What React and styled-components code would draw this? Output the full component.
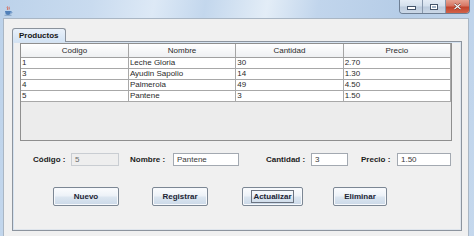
import styled, { createGlobalStyle } from "styled-components";

const Global = createGlobalStyle`
  html, body { margin: 0; padding: 0; }
  body {
    width: 474px;
    height: 236px;
    overflow: hidden;
    font-family: "Liberation Sans", Arial, sans-serif;
  }
`;

const columns = ["Codigo", "Nombre", "Cantidad", "Precio"];

const productos = [
  ["1", "Leche Gloria", "30", "2.70"],
  ["3", "Ayudin Sapolio", "14", "1.30"],
  ["4", "Palmerola", "49", "4.50"],
  ["5", "Pantene", "3", "1.50"],
];

const campos = [
  { label: "Código :", w: 38, value: "5", fw: 48, after: 11, disabled: true },
  { label: "Nombre :", w: 43, value: "Pantene", fw: 66, after: 27 },
  { label: "Cantidad :", w: 45, value: "3", fw: 37, after: 13 },
  { label: "Precio :", w: 36, value: "1.50", fw: 54, after: 0 },
];

const botones = [
  { text: "Nuevo", w: 66, ml: 33 },
  { text: "Registrar", w: 56, ml: 33 },
  { text: "Actualizar", w: 61, ml: 34, focus: true },
  { text: "Eliminar", w: 54, ml: 30 },
];

const JavaIcon = () => (
  <svg width="9" height="10" viewBox="0 0 9 10">
    <path d="M3.5 0.5 C2.5 1.8 4.5 2.4 3.3 3.8" stroke="#d9533a" strokeWidth="0.9" fill="none" />
    <path d="M5.3 0.8 C4.6 1.8 5.8 2.3 5 3.6" stroke="#d9533a" strokeWidth="0.8" fill="none" />
    <path d="M1 5 L7 5 L6.3 8.3 Q4 9.6 1.7 8.3 Z" fill="#4f7fb8" />
    <path d="M7 5.6 Q8.7 5.8 7.6 7.4" stroke="#4f7fb8" strokeWidth="0.8" fill="none" />
    <path d="M0.5 9.3 L7.5 9.3" stroke="#6f8fb3" strokeWidth="0.7" />
  </svg>
);

const App = () => {
  return (
    <>
      <Global />
      <Window>
        <TitleBar>
          <IconSlot>
            <JavaIcon />
          </IconSlot>
          <Controls>
            <CtrlButton>
              <MinGlyph />
            </CtrlButton>
            <CtrlButton>
              <MaxGlyph />
            </CtrlButton>
            <CloseButton>
              <svg width="9" height="7" viewBox="0 0 9 7">
                <path d="M1.5 1 L7.5 6 M7.5 1 L1.5 6" stroke="#4a1a12" strokeWidth="2.2" />
                <path d="M1.5 1 L7.5 6 M7.5 1 L1.5 6" stroke="#ffffff" strokeWidth="1.2" />
              </svg>
            </CloseButton>
          </Controls>
        </TitleBar>
        <Frame>
          <Content>
            <Tab>Productos</Tab>
            <TabPanel>
              <ScrollPane>
                <Table>
                  <thead>
                    <tr>
                      {columns.map((c) => (
                        <HeadCell key={c}>{c}</HeadCell>
                      ))}
                    </tr>
                  </thead>
                  <tbody>
                    {productos.map((row) => (
                      <tr key={row[0]}>
                        {row.map((v, i) => (
                          <Cell key={i}>{v}</Cell>
                        ))}
                      </tr>
                    ))}
                  </tbody>
                </Table>
              </ScrollPane>
              <FormRow>
                {campos.map((c) => (
                  <FieldGroup key={c.label} $after={c.after}>
                    <Label $w={c.w}>{c.label}</Label>
                    <Field $w={c.fw} $disabled={c.disabled}>
                      {c.value}
                    </Field>
                  </FieldGroup>
                ))}
              </FormRow>
              <ButtonRow>
                {botones.map((b) => (
                  <Button key={b.text} $w={b.w} $ml={b.ml}>
                    <ButtonText $focus={b.focus}>{b.text}</ButtonText>
                  </Button>
                ))}
              </ButtonRow>
            </TabPanel>
          </Content>
        </Frame>
      </Window>
    </>
  );
};

const Window = styled.div`
  width: 474px;
  height: 236px;
  display: flex;
  flex-direction: column;
  background: linear-gradient(
    100deg,
    #bcd2ea 0%,
    #c9dbef 18%,
    #dde9f6 30%,
    #c3d7ed 40%,
    #e3edf7 52%,
    #c1d5ec 62%,
    #b6cde7 78%,
    #c5d8ed 100%
  );
`;

const TitleBar = styled.div`
  height: 18px;
  display: flex;
  align-items: flex-start;
  justify-content: space-between;
`;

const IconSlot = styled.div`
  width: 9px;
  height: 10px;
  margin: 6px 0 0 4px;
  display: flex;
`;

const Controls = styled.div`
  display: flex;
  height: 13px;
  margin-right: 4px;
  border: 1px solid #6e7f94;
  border-top: none;
  border-radius: 0 0 4px 4px;
  overflow: hidden;
`;

const CtrlButton = styled.div`
  width: 22px;
  display: flex;
  align-items: center;
  justify-content: center;
  border-right: 1px solid #8797ab;
  background: linear-gradient(#e4ecf5 0%, #d3dfec 48%, #bccbdd 52%, #cbd8e7 100%);
`;

const MinGlyph = styled.div`
  width: 7px;
  height: 2px;
  margin-top: 3px;
  background: #ffffff;
  border: 1px solid #44546a;
`;

const MaxGlyph = styled.div`
  width: 6px;
  height: 4px;
  border: 1px solid #44546a;
  box-shadow: inset 0 0 0 1px #ffffff;
  background: #9fb1c6;
`;

const CloseButton = styled.div`
  width: 23px;
  display: flex;
  align-items: center;
  justify-content: center;
  background: linear-gradient(#e6a291 0%, #d77663 45%, #c2432c 55%, #d2634a 100%);
`;

const Frame = styled.div`
  flex: 1;
  display: flex;
  padding: 0 5px 0 3px;
  min-height: 0;
`;

const Content = styled.div`
  flex: 1;
  background: #f0f0f0;
  border: 1px solid #a9b6c4;
  border-bottom: none;
  padding: 9px 6px 0 8px;
  display: flex;
  flex-direction: column;
`;

const Tab = styled.div`
  align-self: flex-start;
  width: 46px;
  height: 13px;
  padding-left: 6px;
  border: 1px solid #8a929c;
  border-bottom: none;
  border-radius: 3px 3px 0 0;
  background: linear-gradient(#e9f1fa, #d3e3f4);
  font-size: 8px;
  font-weight: bold;
  line-height: 13px;
  color: #151515;
  position: relative;
  z-index: 1;
  margin-bottom: -1px;
`;

const TabPanel = styled.div`
  height: 187px;
  border: 1px solid #8c949e;
  box-shadow: inset 1px 1px 0 #d6e3f1, inset -1px -1px 0 #dfe5ec;
  padding: 1px 0 0 7px;
  display: flex;
  flex-direction: column;
`;

const ScrollPane = styled.div`
  width: 430px;
  height: 96px;
  border: 1px solid #8f8f8f;
  background: #ececec;
`;

const Table = styled.table`
  width: 430px;
  border-collapse: collapse;
  table-layout: fixed;
  font-size: 8px;
  color: #2a2a2a;
`;

const HeadCell = styled.th`
  height: 13px;
  padding: 0;
  font-weight: normal;
  text-align: center;
  line-height: 13px;
  background: linear-gradient(#ffffff, #eef0f2);
  border-right: 1px solid #a5a5a5;
  border-bottom: 1px solid #a0a0a0;
`;

const Cell = styled.td`
  height: 10px;
  padding: 0 0 0 1px;
  line-height: 10px;
  background: #ffffff;
  border-right: 1px solid #a8a8a8;
  border-bottom: 1px solid #a8a8a8;
  white-space: nowrap;
  overflow: hidden;
`;

const FormRow = styled.div`
  display: flex;
  align-items: center;
  margin-top: 12px;
  padding-left: 13px;
  height: 13px;
`;

const FieldGroup = styled.div`
  display: flex;
  align-items: center;
  margin-right: ${(p) => p.$after}px;
`;

const Label = styled.div`
  width: ${(p) => p.$w}px;
  font-size: 8px;
  font-weight: bold;
  color: #1b1b1b;
  white-space: nowrap;
`;

const Field = styled.div`
  width: ${(p) => p.$w - 5}px;
  height: 11px;
  padding-left: 3px;
  border: 1px solid ${(p) => (p.$disabled ? "#c9cdd2" : "#a3a9b1")};
  background: ${(p) => (p.$disabled ? "#eeeeee" : "#ffffff")};
  color: ${(p) => (p.$disabled ? "#6b6b6b" : "#3a3a3a")};
  font-size: 8px;
  line-height: 11px;
`;

const ButtonRow = styled.div`
  display: flex;
  margin-top: 21px;
`;

const Button = styled.div`
  width: ${(p) => p.$w - 2}px;
  height: 17px;
  margin-left: ${(p) => p.$ml}px;
  border: 1px solid #7c8794;
  border-radius: 2px;
  background: linear-gradient(#fbfcfe 0%, #edf2f8 45%, #dbe5f0 55%, #cbd9e8 100%);
  display: flex;
  align-items: center;
  justify-content: center;
  font-size: 8px;
  font-weight: bold;
  color: #1c2434;
  box-shadow: inset 0 0 0 1px #f7f9fc;
`;

const ButtonText = styled.span`
  padding: 1px 1px;
  line-height: 9px;
  outline: ${(p) => (p.$focus ? "1px solid #6b7380" : "none")};
`;

export default App;
